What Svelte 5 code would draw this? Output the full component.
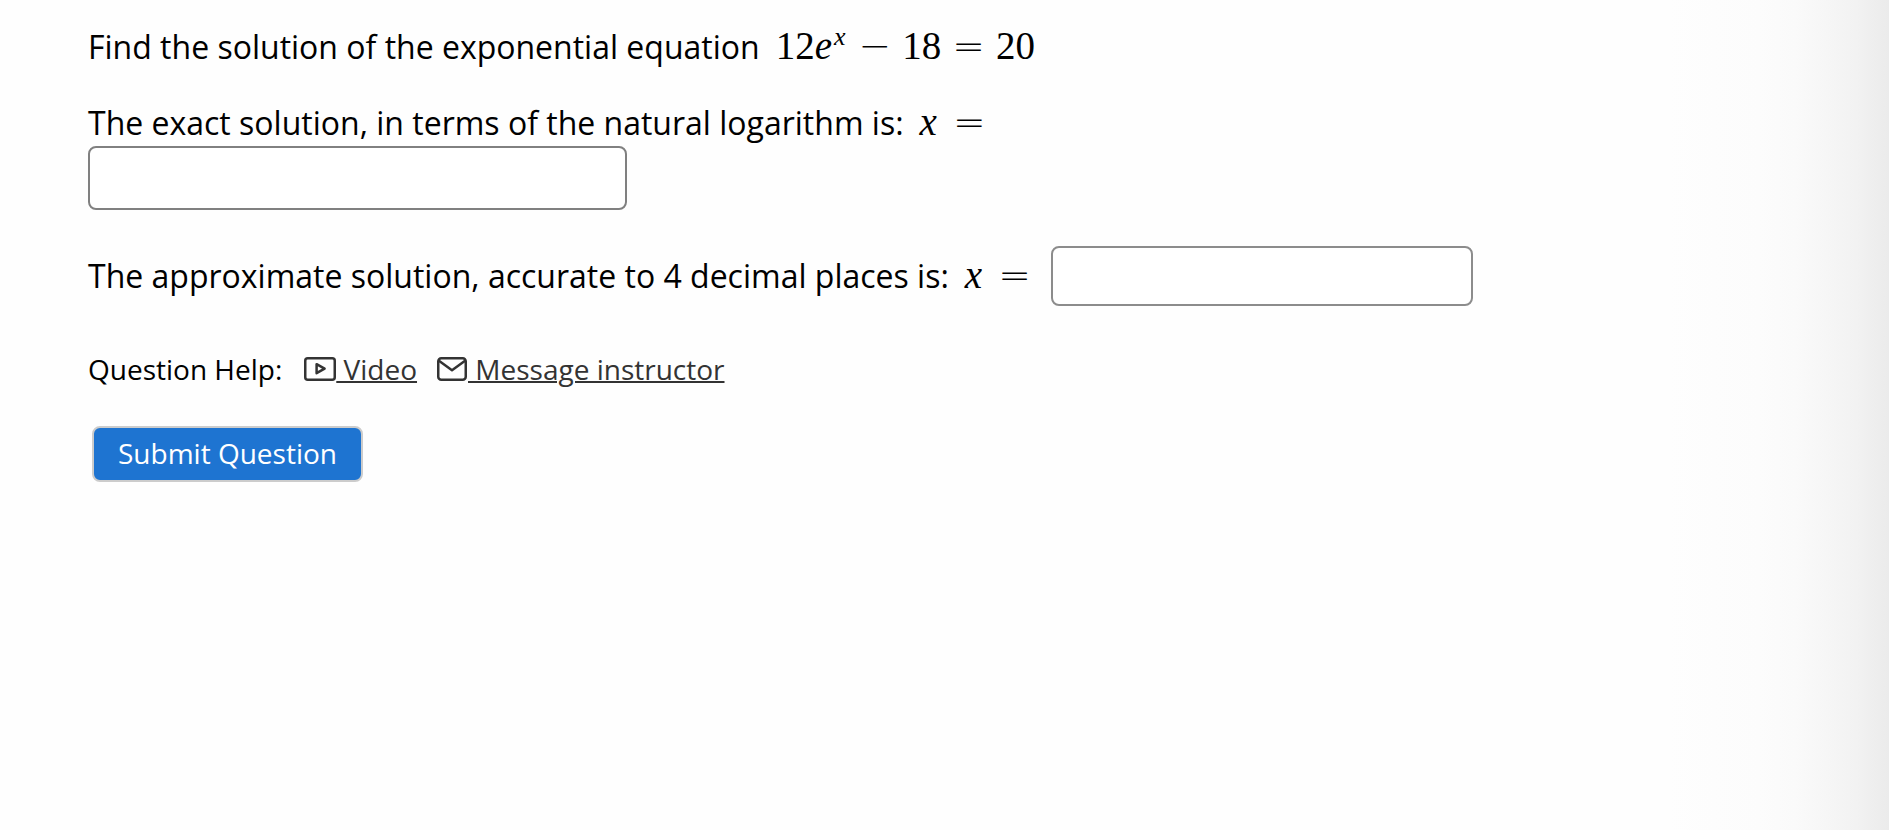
<script>
  let exact = $state('');
  let approximate = $state('');
</script>

<main>
  <p class="prompt">
    <span>Find the solution of the exponential equation</span>
    <span class="math"><span>12<i>e</i><sup><i>x</i></sup></span><span class="op">−</span><span>18</span><span class="op">=</span><span>20</span></span>
  </p>

  <form onsubmit={(event) => event.preventDefault()}>
    <div class="exact">
      <label class="line" for="exact">
        <span>The exact solution, in terms of the natural logarithm is:</span>
        <span class="math"><i>x</i><span class="op">=</span></span>
      </label>
      <input id="exact" type="text" autocomplete="off" bind:value={exact} />
    </div>

    <div class="approximate">
      <label class="line" for="approximate">
        <span>The approximate solution, accurate to 4 decimal places is:</span>
        <span class="math"><i>x</i><span class="op">=</span></span>
      </label>
      <input id="approximate" type="text" autocomplete="off" bind:value={approximate} />
    </div>

    <div class="help">
      <span>Question Help:</span>
      <div class="links">
        <a href="#video">
          <svg width="32" height="24" viewBox="0 0 32 24" aria-hidden="true">
            <rect x="1.25" y="1.25" width="29.5" height="21.5" rx="2.5" />
            <path d="M12.6 7.2v9l8-4.5z" />
          </svg><span>&nbsp;Video</span>
        </a>
        <a href="#message">
          <svg width="31" height="24" viewBox="0 0 31 24" aria-hidden="true">
            <rect x="1.25" y="1.25" width="27.5" height="21.5" rx="3" />
            <path d="M1.6 3.6 15 13.2 28.4 3.6" />
          </svg><span>&nbsp;Message instructor</span>
        </a>
      </div>
    </div>

    <button type="submit">Submit Question</button>
  </form>
</main>

<style>
  :global(body) {
    margin: 0;
    background: #fefefe;
  }

  main {
    box-sizing: border-box;
    min-height: 100vh;
    padding: 24px 88px;
    color: #000;
    font-family: 'Open Sans', 'Noto Sans', sans-serif;
    font-size: 32px;
    line-height: 46px;
    background: linear-gradient(to left, #ebebeb 0, #eee 15px, #f2f2f2 33px, #f5f5f5 55px, #fafafa 94px, #fcfcfc 130px, #fefefe 220px) right / 300px 100% no-repeat;
  }

  .prompt,
  .line {
    display: flex;
    align-items: baseline;
    gap: 16px;
    margin: 0;
  }

  .prompt {
    margin-bottom: 30px;
  }

  .math {
    display: inline-flex;
    align-items: baseline;
    gap: 11px;
    font-family: 'Liberation Serif', serif;
    font-size: 39px;
    line-height: 40px;
  }

  .line .math {
    gap: 14px;
  }

  .math i {
    padding-right: 2px;
  }

  .math sup {
    font-size: 26px;
    line-height: 0;
    vertical-align: 14px;
  }

  .op {
    font-family: 'DejaVu Sans', sans-serif;
    font-weight: 200;
    font-size: 39px;
  }

  .exact {
    display: flex;
    flex-direction: column;
    align-items: flex-start;
    margin-bottom: 36px;
  }

  .approximate {
    display: flex;
    align-items: center;
    gap: 20px;
    margin-bottom: 44px;
  }

  input {
    box-sizing: border-box;
    max-width: 100%;
    padding: 6px 12px;
    border: 2px solid #8c8c8c;
    border-radius: 8px;
    background: #fff;
    color: inherit;
    font: inherit;
  }

  #exact {
    width: 539px;
    height: 64px;
    border-color: #808080;
  }

  #approximate {
    width: 422px;
    height: 60px;
  }

  .help {
    display: flex;
    align-items: center;
    gap: 22px;
    margin-bottom: 38px;
    font-size: 28px;
    line-height: 38px;
  }

  .links {
    display: flex;
    gap: 20px;
  }

  .help a {
    display: inline-flex;
    align-items: center;
    color: #333;
    text-decoration: none;
  }

  .help a span {
    text-decoration: underline;
    text-decoration-thickness: 2px;
  }

  .help svg {
    fill: none;
    stroke: #333;
    stroke-width: 2.5;
    stroke-linejoin: round;
  }

  button {
    display: block;
    margin: 0 4px;
    padding: 6px 24px 8px;
    border: 2px solid #ccc;
    border-radius: 8px;
    background: #1e74d1;
    color: #fff;
    font: inherit;
    font-size: 28px;
    line-height: 38px;
  }
</style>
